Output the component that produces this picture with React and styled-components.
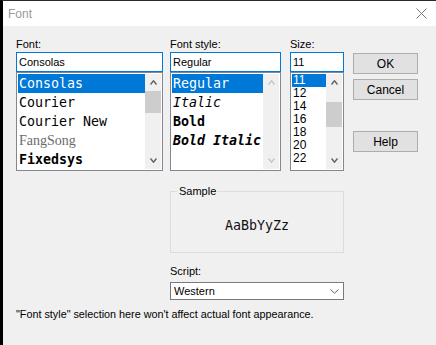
import React from "react";
import styled, { createGlobalStyle } from "styled-components";

const UI = `"Liberation Sans", Arial, sans-serif`;
const MONO = `"DejaVu Sans Mono", "Liberation Mono", monospace`;

const GlobalStyle = createGlobalStyle`
  html, body {
    margin: 0;
    padding: 0;
    background: #f0f0f0;
  }
  body {
    width: 436px;
    height: 345px;
    overflow: hidden;
  }
`;

const Window = styled.div`
  width: 436px;
  height: 345px;
  box-sizing: border-box;
  border-left: 3px solid #000;
  border-top: 1px solid #2b2b2b;
  background: #f0f0f0;
  font-family: ${UI};
  font-size: 11px;
  color: #000;
  display: flex;
  flex-direction: column;
`;

const TitleBar = styled.div`
  height: 25px;
  flex: none;
  background: #fff;
  display: flex;
  align-items: center;
  justify-content: space-between;
  padding: 0 9px 0 5px;
`;

const Title = styled.span`
  font-size: 12px;
  color: #999;
`;

const Body = styled.div`
  padding: 11px 0 0 13px;
  display: flex;
  flex-direction: column;
`;

const TopGrid = styled.div`
  display: grid;
  grid-template-columns: 147px 113px 56px 65px;
  column-gap: 7px;
`;

const Column = styled.div`
  display: flex;
  flex-direction: column;
  width: ${(p) => p.$w}px;
`;

const Label = styled.div`
  height: 14px;
  line-height: 14px;
  margin-bottom: 1px;
`;

const Input = styled.div`
  height: 20px;
  box-sizing: border-box;
  border: 1px solid #0078d7;
  background: #fff;
  padding-left: 2px;
  line-height: 18px;
  font-size: 11px;
`;

const List = styled.div`
  height: 99px;
  box-sizing: border-box;
  border: 1px solid #828790;
  background: #fff;
  padding: 1px;
  display: flex;
  overflow: hidden;
`;

const Items = styled.div`
  flex: 1;
  display: flex;
  flex-direction: column;
  min-width: 0;
`;

const Item = styled.div`
  height: ${(p) => p.$h}px;
  line-height: ${(p) => p.$h}px;
  padding-left: 1px;
  white-space: nowrap;
  font-family: ${(p) => (p.$mono ? MONO : p.$serif ? `"Liberation Serif", serif` : UI)};
  font-size: ${(p) => p.$size}px;
  font-weight: ${(p) => (p.$bold ? 700 : 400)};
  font-style: ${(p) => (p.$italic ? "italic" : "normal")};
  background: ${(p) => (p.$selected ? "#0078d7" : "transparent")};
  color: ${(p) => (p.$selected ? "#fff" : p.$dim ? "#6b6b6b" : "#000")};
`;

const Scrollbar = styled.div`
  width: 16px;
  flex: none;
  background: #f0f0f0;
  display: flex;
  flex-direction: column;
`;

const ArrowBox = styled.div`
  height: 17px;
  flex: none;
  display: flex;
  align-items: center;
  justify-content: center;
`;

const Track = styled.div`
  flex: 1;
  display: flex;
  flex-direction: column;
`;

const Thumb = styled.div`
  margin-top: ${(p) => p.$top}px;
  height: ${(p) => p.$h}px;
  background: #cdcdcd;
`;

const ButtonColumn = styled.div`
  display: flex;
  flex-direction: column;
  padding-top: 16px;
`;

const Button = styled.div`
  height: 21px;
  box-sizing: border-box;
  border: 1px solid #adadad;
  background: #e1e1e1;
  display: flex;
  align-items: center;
  justify-content: center;
  font-size: 12px;
  margin-top: ${(p) => p.$mt || 0}px;
`;

const Lower = styled.div`
  margin-left: 154px;
  width: 174px;
  display: flex;
  flex-direction: column;
`;

const Group = styled.fieldset`
  margin: 13px 0 0 0;
  padding: 0;
  border: 1px solid #dcdcdc;
  min-inline-size: 0;
`;

const Legend = styled.legend`
  margin-left: 6px;
  padding: 0 2px;
  line-height: 14px;
  font-size: 11px;
`;

const SampleText = styled.div`
  height: 54px;
  display: flex;
  align-items: center;
  justify-content: center;
  font-family: ${MONO};
  font-size: 13.3px;
  color: #111;
`;

const ScriptLabel = styled(Label)`
  margin-top: 11px;
  margin-bottom: 4px;
`;

const Combo = styled.div`
  height: 18px;
  box-sizing: border-box;
  border: 1px solid #7a7a7a;
  background: #fff;
  display: flex;
  align-items: center;
  justify-content: space-between;
  padding: 0 4px 0 3px;
  font-size: 11px;
`;

const Note = styled.div`
  margin-top: 7px;
  line-height: 14px;
  font-size: 10.8px;
`;

const Chevron = ({ up, color = "#606060", w = 7, h = 4, sw = 1.4 }) => (
  <svg width={w} height={h + 1} viewBox={`0 0 ${w} ${h + 1}`}>
    <polyline
      points={
        up
          ? `0.5,${h + 0.5} ${w / 2},0.8 ${w - 0.5},${h + 0.5}`
          : `0.5,0.5 ${w / 2},${h + 0.2} ${w - 0.5},0.5`
      }
      fill="none"
      stroke={color}
      strokeWidth={sw}
    />
  </svg>
);

const ScrollBarPart = ({ thumbTop, thumbH, disabled }) => {
  const c = disabled ? "#c4c4c4" : "#606060";
  return (
    <Scrollbar>
      <ArrowBox>
        <Chevron up color={c} />
      </ArrowBox>
      <Track>{thumbH ? <Thumb $top={thumbTop} $h={thumbH} /> : null}</Track>
      <ArrowBox>
        <Chevron color={c} />
      </ArrowBox>
    </Scrollbar>
  );
};

const fonts = [
  { name: "Consolas", mono: true, selected: true },
  { name: "Courier", mono: true },
  { name: "Courier New", mono: true },
  { name: "FangSong", serif: true, dim: true },
  { name: "Fixedsys", mono: true, bold: true },
];

const styles = [
  { name: "Regular", selected: true },
  { name: "Italic", italic: true },
  { name: "Bold", bold: true },
  { name: "Bold Italic", bold: true, italic: true },
];

const sizes = ["11", "12", "14", "16", "18", "20", "22"];

export default function App() {
  return (
    <>
      <GlobalStyle />
      <Window>
        <TitleBar>
          <Title>Font</Title>
          <svg width="11" height="11" viewBox="0 0 11 11">
            <path d="M0.5 0.5 L10.5 10.5 M10.5 0.5 L0.5 10.5" stroke="#7a7a7a" strokeWidth="1" />
          </svg>
        </TitleBar>
        <Body>
          <TopGrid>
            <Column $w={147}>
              <Label>Font:</Label>
              <Input>Consolas</Input>
              <List>
                <Items>
                  {fonts.map((f) => (
                    <Item
                      key={f.name}
                      $h={19}
                      $size={f.serif ? 14 : 13.3}
                      $mono={f.mono}
                      $serif={f.serif}
                      $bold={f.bold}
                      $dim={f.dim}
                      $selected={f.selected}
                    >
                      {f.name}
                    </Item>
                  ))}
                </Items>
                <ScrollBarPart thumbTop={0} thumbH={22} />
              </List>
            </Column>
            <Column $w={111}>
              <Label>Font style:</Label>
              <Input>Regular</Input>
              <List>
                <Items>
                  {styles.map((s) => (
                    <Item
                      key={s.name}
                      $h={19}
                      $size={13.3}
                      $mono
                      $bold={s.bold}
                      $italic={s.italic}
                      $selected={s.selected}
                    >
                      {s.name}
                    </Item>
                  ))}
                </Items>
                <ScrollBarPart disabled />
              </List>
            </Column>
            <Column $w={54}>
              <Label>Size:</Label>
              <Input>11</Input>
              <List>
                <Items>
                  {sizes.map((s, i) => (
                    <Item key={s} $h={13} $size={12} $selected={i === 0}>
                      {s}
                    </Item>
                  ))}
                </Items>
                <ScrollBarPart thumbTop={11} thumbH={25} />
              </List>
            </Column>
            <ButtonColumn>
              <Button>OK</Button>
              <Button $mt={5}>Cancel</Button>
              <Button $mt={31}>Help</Button>
            </ButtonColumn>
          </TopGrid>
          <Lower>
            <Group>
              <Legend>Sample</Legend>
              <SampleText>AaBbYyZz</SampleText>
            </Group>
            <ScriptLabel>Script:</ScriptLabel>
            <Combo>
              <span>Western</span>
              <Chevron w={9} h={4} sw={1} />
            </Combo>
          </Lower>
          <Note>"Font style" selection here won't affect actual font appearance.</Note>
        </Body>
      </Window>
    </>
  );
}
